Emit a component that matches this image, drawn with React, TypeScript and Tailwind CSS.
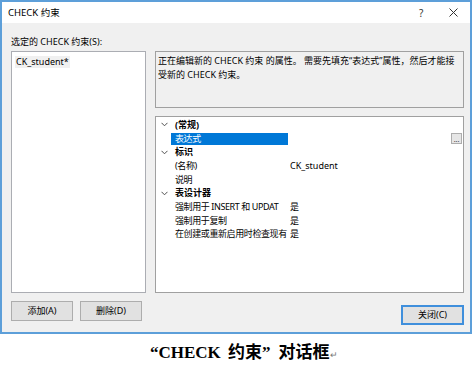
import React from "react";

const Chevron = () => (
  <svg width="7" height="5" viewBox="0 0 7 5" className="block">
    <path d="M0.5 0.8 L3.5 3.8 L6.5 0.8" fill="none" stroke="#505050" strokeWidth="1" />
  </svg>
);

type Row =
  | { kind: "cat"; label: string }
  | { kind: "prop"; name: string; value?: string; selected?: boolean; button?: boolean };

const rows: Row[] = [
  { kind: "cat", label: "(常规)" },
  { kind: "prop", name: "表达式", selected: true, button: true },
  { kind: "cat", label: "标识" },
  { kind: "prop", name: "(名称)", value: "CK_student" },
  { kind: "prop", name: "说明" },
  { kind: "cat", label: "表设计器" },
  { kind: "prop", name: "强制用于 INSERT 和 UPDAT", value: "是" },
  { kind: "prop", name: "强制用于复制", value: "是" },
  { kind: "prop", name: "在创建或重新启用时检查现有", value: "是" },
];

export default function App() {
  return (
    <div
      className="w-[474px] h-[366px] bg-white overflow-hidden text-black"
      style={{ fontFamily: '"Noto Sans", "Noto Sans CJK SC", sans-serif' }}
    >
      <div className="w-[472px] h-[334px] border-2 border-[#5d9fd9] flex flex-col bg-[#f0f0f0]">
        {/* title bar */}
        <div className="h-[21px] bg-white flex items-center text-[9.5px] leading-[12px] shrink-0">
          <div className="pl-[6px] flex-1">CHECK 约束</div>
          <div className="w-[10px] text-[10px] text-[#333] mr-[20px]">?</div>
          <svg width="9" height="9" viewBox="0 0 9 9" className="mr-[12px]">
            <path d="M0.5 0.5 L8.5 8.5 M8.5 0.5 L0.5 8.5" stroke="#333" strokeWidth="1" />
          </svg>
        </div>
        {/* body */}
        <div className="flex flex-1 text-[9px]">
          {/* left column */}
          <div className="ml-[9px] w-[135px] flex flex-col">
            <div className="h-[28px] pt-[13px] leading-[12px]">选定的 CHECK 约束(S):</div>
            <div className="h-[242px] border border-[#abadb3] bg-white pt-[3px] pl-[3px]">
              <span className="inline-block bg-[#f0f0f0] px-[1px] leading-[12px]">CK_student*</span>
            </div>
            <div className="flex mt-[8px] gap-[7px]">
              <div className="w-[62px] h-[20px] border border-[#adadad] bg-[#e1e1e1] flex items-center justify-center leading-[12px]">
                添加(A)
              </div>
              <div className="w-[62px] h-[20px] border border-[#adadad] bg-[#e1e1e1] flex items-center justify-center leading-[12px]">
                删除(D)
              </div>
            </div>
          </div>
          {/* right column */}
          <div className="ml-[9px] w-[309px] flex flex-col">
            <div className="mt-[28px] h-[57px] border border-[#a0a0a0] bg-[#f0f0f0] px-[2px] pt-[2px] leading-[13.5px]">
              正在编辑新的 CHECK 约束 的属性。 需要先填充“表达式”属性，然后才能接受新的 CHECK 约束。
            </div>
            <div className="mt-[8px] h-[177px] border border-[#a0a0a0] bg-white pt-[1px] overflow-hidden">
              {rows.map((r, i) =>
                r.kind === "cat" ? (
                  <div key={i} className="h-[13.7px] flex items-center">
                    <div className="w-[15px] flex justify-center pl-[1px]">
                      <Chevron />
                    </div>
                    <div className="pl-[4px] font-bold leading-[12px]">{r.label}</div>
                  </div>
                ) : (
                  <div key={i} className="h-[13.7px] flex items-center">
                    <div className="w-[15px]" />
                    <div
                      className={
                        "w-[117px] h-[12px] pl-[4px] leading-[12px] whitespace-nowrap tracking-[-0.4px] " +
                        (r.selected ? "bg-[#0078d7] text-white" : "")
                      }
                    >
                      {r.name}
                    </div>
                    <div className="flex-1 pl-[2px] leading-[12px] whitespace-nowrap flex items-center">
                      <span className="flex-1">{r.value ?? ""}</span>
                      {r.button && (
                        <span className="w-[11px] h-[11px] mr-[1px] border border-[#adadad] bg-[#e6e6e6] flex items-end justify-center text-[7px] leading-[7px] text-[#444]">
                          ...
                        </span>
                      )}
                    </div>
                  </div>
                )
              )}
            </div>
            <div className="mt-[12px] flex justify-end">
              <div className="w-[63px] h-[20px] border-2 border-[#3f8fdc] bg-[#e1e1e1] flex items-center justify-center leading-[12px]">
                关闭(C)
              </div>
            </div>
          </div>
        </div>
      </div>
      {/* caption */}
      <div
        className="pl-[150px] pt-[9px] font-bold text-[17px] leading-[20px] whitespace-nowrap"
        style={{ fontFamily: '"Liberation Serif", "Noto Sans CJK SC", serif' }}
      >
        “CHECK <span className="ml-[3px]">约束</span>”<span className="ml-[8px]">对话框</span>
        <span className="text-[9px] font-normal text-[#777] align-baseline">↵</span>
      </div>
    </div>
  );
}
